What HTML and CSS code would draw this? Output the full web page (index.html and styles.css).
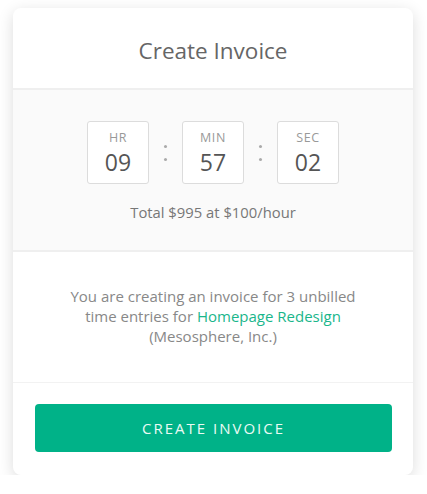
FILE: index.html
```html
<!DOCTYPE html>
<html lang="en">
<head>
    <meta charset="UTF-8">
    <meta name="viewport" content="width=device-width, initial-scale=1.0">
    <title>Create Invoice</title>
    <link rel="stylesheet" href="styles.css">
</head>
<body>
    <div class="card">
        <div class="card-header">
            <h2>Create Invoice</h2>
        </div>

        <div class="timer-section">
            <div class="timer">
                <div class="time-box">
                    <span class="time-label">HR</span>
                    <span class="time-value">09</span>
                </div>
                <div class="colon"><i></i><i></i></div>
                <div class="time-box">
                    <span class="time-label">MIN</span>
                    <span class="time-value">57</span>
                </div>
                <div class="colon"><i></i><i></i></div>
                <div class="time-box">
                    <span class="time-label">SEC</span>
                    <span class="time-value">02</span>
                </div>
            </div>
            <p class="total">Total $995 at $100/hour</p>
        </div>

        <div class="summary">
            <p>You are creating an invoice for 3 unbilled<br>time entries for <a href="#">Homepage Redesign</a><br>(Mesosphere, Inc.)</p>
        </div>

        <div class="card-footer">
            <button class="create-btn">Create Invoice</button>
        </div>
    </div>
</body>
</html>
```

FILE: styles.css
```css
* {
    margin: 0;
    padding: 0;
    box-sizing: border-box;
}

body {
    font-family: 'Open Sans', Lato, sans-serif;
    background: #fff;
    color: #555;
    padding: 8px 14px 0 13px;
}

.card {
    width: 400px;
    background: #fff;
    border-radius: 8px;
    box-shadow: 0 4px 16px rgba(0, 0, 0, 0.14);
    overflow: hidden;
}

.card-header {
    height: 82px;
    display: flex;
    align-items: center;
    justify-content: center;
    border-bottom: 2px solid #efefef;
}

.card-header h2 {
    font-size: 22.5px;
    font-weight: 400;
    color: #666;
    padding-top: 4px;
}

.timer-section {
    background: #fafafa;
    border-bottom: 2px solid #efefef;
    padding: 31px 0 0;
    height: 162px;
}

.timer {
    display: flex;
    justify-content: center;
}

.time-box {
    width: 62px;
    height: 63px;
    background: #fff;
    border: 1px solid #dcdcdc;
    border-radius: 3px;
    display: flex;
    flex-direction: column;
    align-items: center;
    padding-top: 7px;
}

.time-label {
    font-size: 12.5px;
    color: #999;
    line-height: 18px;
    letter-spacing: 0.6px;
}

.time-value {
    font-size: 23px;
    color: #555;
    line-height: 30px;
}

.colon {
    width: 33px;
    display: flex;
    flex-direction: column;
    align-items: center;
    padding-top: 24px;
    gap: 10px;
}

.colon i {
    width: 3px;
    height: 3px;
    border-radius: 50%;
    background: #aaa;
}

.total {
    text-align: center;
    font-size: 14.8px;
    color: #777;
    margin-top: 18px;
}

.summary {
    height: 131px;
    border-bottom: 1px solid #f2f2f2;
    display: flex;
    align-items: center;
    justify-content: center;
    padding-bottom: 2px;
}

.summary p {
    text-align: center;
    font-size: 15px;
    line-height: 20px;
    color: #888;
}

.summary a {
    color: #1ab68b;
    text-decoration: none;
}

.card-footer {
    padding: 21px 21px 23px 22px;
}

.create-btn {
    width: 100%;
    height: 48px;
    border: none;
    border-radius: 4px;
    background: #00b288;
    color: #eafaf4;
    font-family: inherit;
    font-size: 15px;
    text-transform: uppercase;
    letter-spacing: 2px;
    cursor: pointer;
}
```
